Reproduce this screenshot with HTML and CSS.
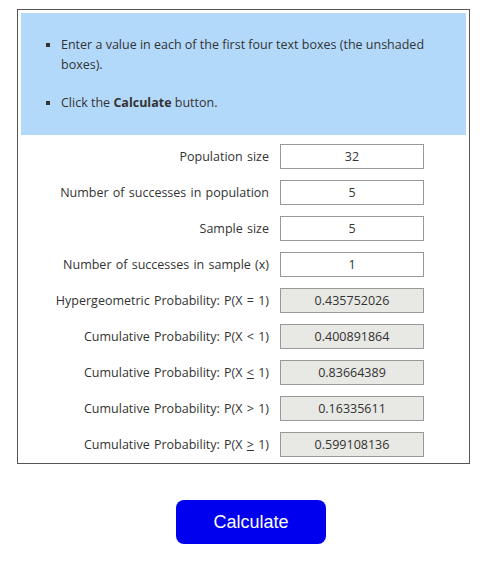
FILE: index.html
```html
<!DOCTYPE html>
<html lang="en">
<head>
    <meta charset="UTF-8">
    <meta name="viewport" content="width=device-width, initial-scale=1.0">
    <title>Hypergeometric Calculator</title>
    <link rel="stylesheet" href="styles.css">
</head>
<body>
    <div class="calc">
        <div class="instructions">
            <ul>
                <li>Enter a value in each of the first four text boxes (the unshaded boxes).</li>
                <li>Click the <b>Calculate</b> button.</li>
            </ul>
        </div>
        <form class="fields" id="hyperForm">
            <label for="popSize">Population size</label>
            <input type="text" id="popSize" value="32">
            <label for="popSucc">Number of successes in population</label>
            <input type="text" id="popSucc" value="5">
            <label for="sampSize">Sample size</label>
            <input type="text" id="sampSize" value="5">
            <label for="sampSucc">Number of successes in sample (x)</label>
            <input type="text" id="sampSucc" value="1">
            <label for="pEq">Hypergeometric Probability: P(X = 1)</label>
            <input type="text" id="pEq" class="out" value="0.435752026" readonly>
            <label for="pLt">Cumulative Probability: P(X &lt; 1)</label>
            <input type="text" id="pLt" class="out" value="0.400891864" readonly>
            <label for="pLe">Cumulative Probability: P(X <u>&lt;</u> 1)</label>
            <input type="text" id="pLe" class="out" value="0.83664389" readonly>
            <label for="pGt">Cumulative Probability: P(X &gt; 1)</label>
            <input type="text" id="pGt" class="out" value="0.16335611" readonly>
            <label for="pGe">Cumulative Probability: P(X <u>&gt;</u> 1)</label>
            <input type="text" id="pGe" class="out" value="0.599108136" readonly>
        </form>
    </div>
    <div class="actions">
        <button type="button" class="calc-btn" onclick="calculate()">Calculate</button>
    </div>

    <script>
        function logChoose(n, k) {
            let s = 0;
            for (let i = 1; i <= k; i++) {
                s += Math.log(n - k + i) - Math.log(i);
            }
            return s;
        }

        function hyper(N, K, n, k) {
            if (k < 0 || k > n || k > K || n - k > N - K) return 0;
            return Math.exp(logChoose(K, k) + logChoose(N - K, n - k) - logChoose(N, n));
        }

        function calculate() {
            const N = parseInt(document.getElementById('popSize').value);
            const K = parseInt(document.getElementById('popSucc').value);
            const n = parseInt(document.getElementById('sampSize').value);
            const x = parseInt(document.getElementById('sampSucc').value);
            let lt = 0;
            for (let i = 0; i < x; i++) lt += hyper(N, K, n, i);
            const eq = hyper(N, K, n, x);
            const fmt = v => parseFloat(v.toPrecision(9)).toString();
            document.getElementById('pEq').value = fmt(eq);
            document.getElementById('pLt').value = fmt(lt);
            document.getElementById('pLe').value = fmt(lt + eq);
            document.getElementById('pGt').value = fmt(1 - lt - eq);
            document.getElementById('pGe').value = fmt(1 - lt);
        }
    </script>
</body>
</html>
```

FILE: styles.css
```css
body {
    margin: 0;
    padding: 9px 0 0 17px;
    font-family: "Open Sans", "Noto Sans", sans-serif;
    font-size: 12.5px;
    color: #333;
    background: #fff;
}

.calc {
    width: 453px;
    box-sizing: border-box;
    border: 1px solid #555;
    padding: 3px 3px 6px 3px;
}

.instructions {
    background: #b3d9fa;
    padding: 22px 20px 22px 0;
}

.instructions ul {
    margin: 0;
    padding-left: 40px;
    list-style: square;
}

.instructions li {
    line-height: 20px;
}

.instructions li + li {
    margin-top: 18px;
}

.fields {
    display: grid;
    grid-template-columns: 1fr 144px;
    column-gap: 11px;
    row-gap: 11px;
    align-items: center;
    padding: 9px 42px 0 0;
}

.fields label {
    text-align: right;
    word-spacing: 1px;
}

.fields input {
    height: 25px;
    box-sizing: border-box;
    border: 1px solid #999;
    background: #fff;
    font-family: inherit;
    font-size: 12.5px;
    color: #333;
    text-align: center;
    padding: 0;
    margin: 0;
}

.fields input.out {
    background: #e8e8e4;
}

.actions {
    padding: 36px 0 0 159px;
}

.calc-btn {
    width: 150px;
    height: 44px;
    border: none;
    border-radius: 8px;
    background: #0000ee;
    color: #fff;
    font-family: "Liberation Sans", Arial, sans-serif;
    font-size: 18px;
    cursor: pointer;
}
```
